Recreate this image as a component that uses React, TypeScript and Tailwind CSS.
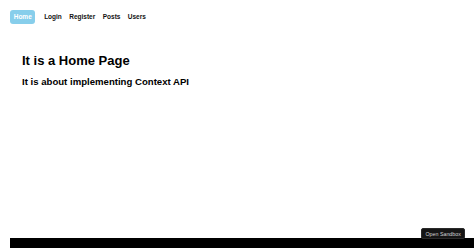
import React from "react";

export default function App() {
  return (
    <div className="relative flex h-screen flex-col overflow-hidden bg-white pl-[10px] font-['Liberation_Sans',Arial,sans-serif] text-black">
      <nav className="flex items-center pt-[10px] text-[6.5px] font-bold leading-[7.5px] text-[#111]">
        <a className="rounded-[3px] bg-[#87ceeb] px-[3.7px] py-[3.25px] text-white">Home</a>
        <a className="ml-[8.7px]">Login</a>
        <a className="ml-[7.4px]">Register</a>
        <a className="ml-[7.5px]">Posts</a>
        <a className="ml-[7.3px]">Users</a>
      </nav>
      <main className="pl-[12px]">
        <h1 className="mt-[28.8px] text-[13px] font-bold leading-[15px]">It is a Home Page</h1>
        <h2 className="mt-[8.6px] text-[9.6px] font-bold leading-[11px]">It is about implementing Context API</h2>
      </main>
      <div className="mt-auto h-[10px] bg-black" />
      <button className="absolute bottom-[8.7px] right-[9px] flex h-[11.3px] w-[43.7px] items-center justify-center rounded-[2px] border border-[#2a2a2a] bg-[#151515] text-[5.3px] leading-[6px] text-[#d4d4d4]">
        Open Sandbox
      </button>
    </div>
  );
}
